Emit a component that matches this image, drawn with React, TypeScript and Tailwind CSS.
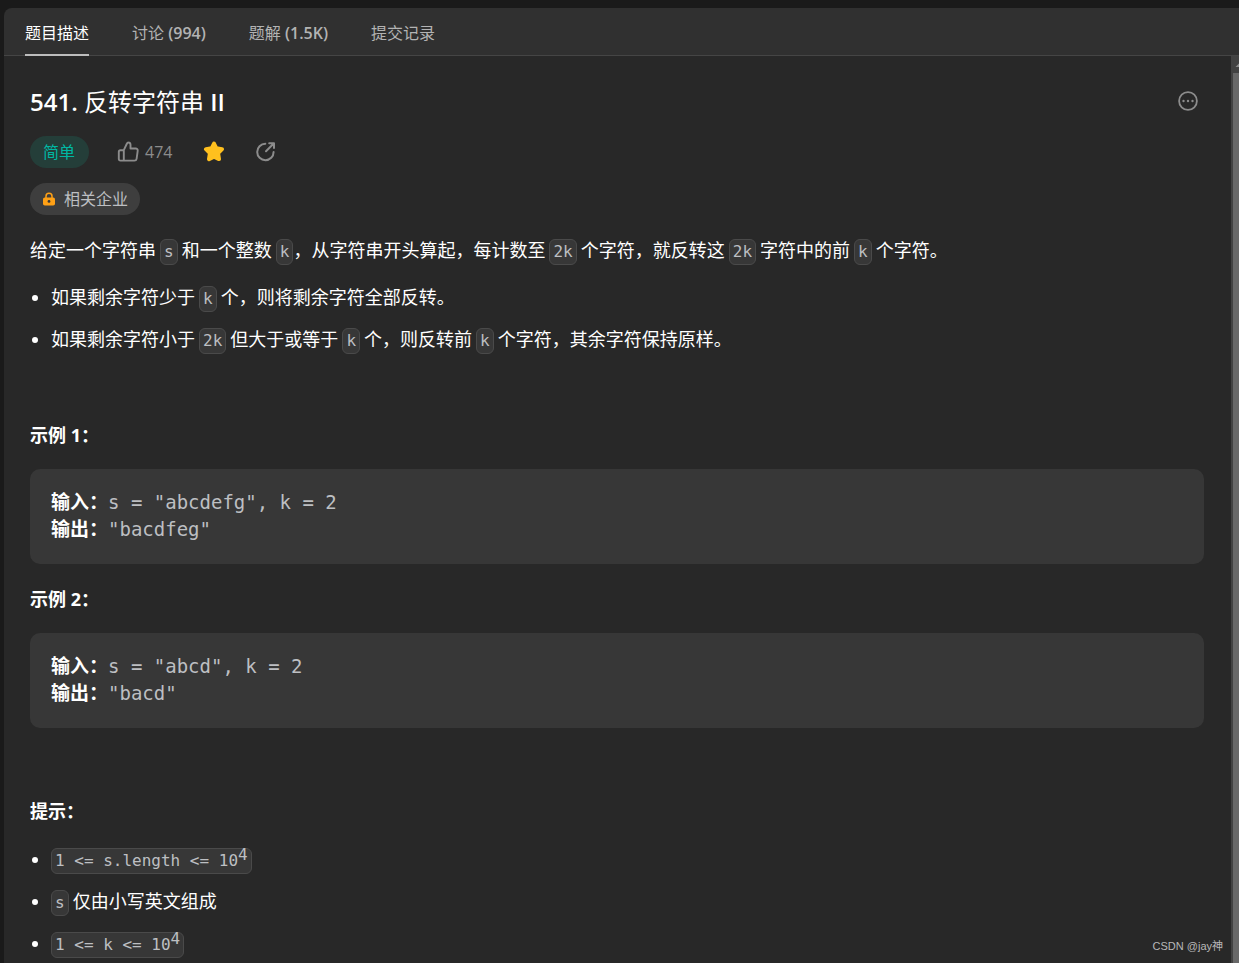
import type { ReactNode } from "react";
import clsx from "clsx";

const tabs = ["题目描述", "讨论 (994)", "题解 (1.5K)", "提交记录"];

function Code({ children }: { children: ReactNode }) {
  return (
    <code className="-my-1 inline-block h-[26px] rounded-md border border-[#4a4a4a] bg-[#373737] px-[3px] align-middle text-base leading-6 text-[#bdbfc2] font-['DejaVu_Sans_Mono','Noto_Sans_CJK_SC',monospace]">
      {children}
    </code>
  );
}

function Power({ children }: { children: ReactNode }) {
  return <sup className="text-base leading-none -top-[6px]">{children}</sup>;
}

function Item({ children }: { children: ReactNode }) {
  return (
    <li className="flex items-center">
      <span className="mt-[3px] mr-[13px] ml-[2px] size-[6px] shrink-0 rounded-full bg-white" />
      <div className="min-w-0">{children}</div>
    </li>
  );
}

function Heading({ children }: { children: ReactNode }) {
  return <h2 className="mb-[21px] font-bold font-['Open_Sans','Noto_Sans_CJK_SC',sans-serif]">{children}</h2>;
}

function Example({ title, input, output }: { title: string; input: string; output: string }) {
  return (
    <section className="mb-[22px]">
      <Heading>{title}</Heading>
      <pre className="overflow-hidden rounded-[10px] bg-[#373737] px-[21px] pt-5 pb-[21px] text-[19px] leading-[27px] text-[#bdbfc2] font-['DejaVu_Sans_Mono','Noto_Sans_CJK_SC',monospace]">
        <strong className="text-white">输入：</strong>
        {input + "\n"}
        <strong className="text-white">输出：</strong>
        {output}
      </pre>
    </section>
  );
}

function ThumbIcon() {
  return (
    <svg viewBox="0 0 22 22" className="size-[22px]" fill="none" stroke="currentColor" strokeWidth="1.900" strokeLinejoin="round" strokeLinecap="round">
      <path d="M6.800 9.200 9.700 3c.5-1.100 1.100-1.600 1.900-1.500 1.200.1 1.900 1 1.900 2.300v3.700h5.200c1.300 0 2.200 1 2 2.300l-1.100 8c-.2 1.200-1 1.800-2.200 1.800H3.400c-1 0-1.600-.6-1.600-1.600v-7.200c0-1 .6-1.600 1.600-1.600h3.400v10.400" />
    </svg>
  );
}

function StarIcon() {
  return (
    <svg viewBox="0 0 22 22" className="size-[22px]" fill="#ffc01e" stroke="#ffc01e" strokeWidth="4" strokeLinejoin="round">
      <path d="m11 2.600 2.400 4.700 5.600.9-3.900 4 .9 5.900L11 15.600l-5 2.500.9-5.900-3.900-4 5.600-.9z" />
    </svg>
  );
}

function ShareIcon() {
  return (
    <svg viewBox="0 0 22 22" className="size-[22px]" fill="none" stroke="currentColor" strokeWidth="2" strokeLinecap="round" strokeLinejoin="round">
      <path d="M10.300 2.800a8.200 8.200 0 1 0 8.300 8.200" />
      <path d="M14.200 2.200h4.800v4.800M18.700 2.500l-7.700 7.800" />
    </svg>
  );
}

function MoreIcon() {
  return (
    <svg viewBox="0 0 22 22" className="size-[22px]" fill="currentColor">
      <circle cx="11" cy="11" r="8.900" fill="none" stroke="currentColor" strokeWidth="1.800" />
      <circle cx="6.500" cy="11" r="1.200" />
      <circle cx="11" cy="11" r="1.200" />
      <circle cx="15.500" cy="11" r="1.200" />
    </svg>
  );
}

function LockIcon() {
  return (
    <svg viewBox="0 0 14 14" className="size-[14px]">
      <path d="M4 6V4.200a3 3 0 0 1 6 0V6" fill="none" stroke="#ffa116" strokeWidth="1.500" />
      <rect x="1" y="5.500" width="12" height="8" rx="1.800" fill="#ffa116" />
      <circle cx="7" cy="9.400" r="1.400" fill="#373737" />
    </svg>
  );
}

export default function App() {
  return (
    <div className="relative flex h-screen flex-col overflow-hidden bg-[#1a1a1a] pt-2 pl-1 text-white font-['Open_Sans','Noto_Sans_CJK_SC',sans-serif]">
      <nav className="flex h-12 shrink-0 gap-[43px] rounded-tl-lg border-b border-[#454545] bg-[#303030] pl-[21px]">
        {tabs.map((tab, i) => (
          <a
            key={tab}
            href="#"
            className={clsx(
              "-mb-px flex items-center border-b-2 pt-[3px] text-base font-semibold whitespace-nowrap",
              i === 0 ? "border-[#bdbdbd] text-white" : "border-transparent text-[#b3b3b3]"
            )}
          >
            {/* only the counters are heavier than regular */}
            <span>
              <span className="font-normal">{tab.split(" ")[0]}</span>
              {tab.includes(" ") && " " + tab.split(" ")[1]}
            </span>
          </a>
        ))}
      </nav>

      <div className="flex min-h-0 flex-1 bg-[#282828]">
        <main className="min-w-0 flex-1 overflow-hidden pt-7 pr-[27px] pl-[26px]">
          <div className="flex items-start justify-between">
            <h1 className="text-2xl leading-9">
              <span className="font-semibold">541.</span> 反转字符串 <span className="font-semibold">II</span>
            </h1>
            <button aria-label="更多" className="mt-[6px] mr-[5px] text-[#8c8c8c]">
              <MoreIcon />
            </button>
          </div>

          <div className="mt-4 flex h-8 items-center text-[#8c8c8c]">
            <span className="flex h-8 items-center rounded-full bg-[#243e39] pr-[14px] pl-[13px] text-base text-[#00b8a3]">简单</span>
            <button className="ml-7 flex items-center gap-[6px] text-base">
              <ThumbIcon />
              474
            </button>
            <button aria-label="收藏" className="ml-[31px]">
              <StarIcon />
            </button>
            <button aria-label="分享" className="ml-[30px]">
              <ShareIcon />
            </button>
          </div>

          <button className="mt-[15px] flex h-8 items-center gap-2 rounded-full bg-[#3e3e3e] px-3 text-base text-[#bdbfc2]">
            <LockIcon />
            相关企业
          </button>

          <article className="mt-[21px] text-lg leading-[26px] font-['Noto_Sans_CJK_SC',sans-serif]">
            <p>
              给定一个字符串 <Code>s</Code> 和一个整数 <Code>k</Code>，从字符串开头算起，每计数至 <Code>2k</Code> 个字符，就反转这 <Code>2k</Code> 字符中的前 <Code>k</Code> 个字符。
            </p>
            <ul className="mt-[21px] mb-[71px] space-y-4">
              <Item>
                如果剩余字符少于 <Code>k</Code> 个，则将剩余字符全部反转。
              </Item>
              <Item>
                如果剩余字符小于 <Code>2k</Code> 但大于或等于 <Code>k</Code> 个，则反转前 <Code>k</Code> 个字符，其余字符保持原样。
              </Item>
            </ul>

            <Example title="示例 1：" input={'s = "abcdefg", k = 2'} output={'"bacdfeg"'} />
            <Example title="示例 2：" input={'s = "abcd", k = 2'} output={'"bacd"'} />

            <div className="mt-[70px]">
              <Heading>提示：</Heading>
              <ul className="space-y-4">
                <Item>
                  <Code>
                    1 &lt;= s.length &lt;= 10<Power>4</Power>
                  </Code>
                </Item>
                <Item>
                  <Code>s</Code> 仅由小写英文组成
                </Item>
                <Item>
                  <Code>
                    1 &lt;= k &lt;= 10<Power>4</Power>
                  </Code>
                </Item>
              </ul>
            </div>
          </article>
        </main>

        <div aria-hidden="true" className="flex w-2 shrink-0 flex-col overflow-hidden bg-[#424242] pl-[2px]">
          <svg viewBox="0 0 6 17" className="h-[17px] w-[6px] shrink-0">
            <path d="M2.500 11 6 7.500V11z" fill="#8c8c8c" />
          </svg>
          <div className="flex-1 bg-[#686868]" />
        </div>
      </div>

      <span className="absolute right-4 bottom-[9px] text-[11px] leading-4 text-[#b8b8b8] font-['Liberation_Sans','Noto_Sans_CJK_SC',sans-serif]">CSDN @jay神</span>
    </div>
  );
}
